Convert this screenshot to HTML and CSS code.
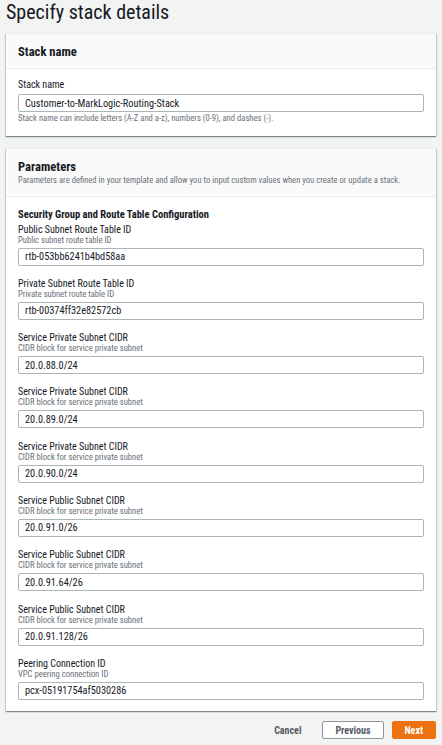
FILE: index.html
```html
<!DOCTYPE html>
<html lang="en">
<head>
<meta charset="utf-8">
<title>Specify stack details</title>
<link rel="stylesheet" href="styles.css">
</head>
<body>
<main class="page">
  <h1 class="title">Specify stack details</h1>

  <section class="card">
    <header class="card-header">
      <h2 class="card-title">Stack name</h2>
    </header>
    <div class="card-body card-body-stack">
      <div class="field field-single">
        <label class="label" for="stackName">Stack name</label>
        <input class="input" id="stackName" type="text" value="Customer-to-MarkLogic-Routing-Stack">
        <p class="hint">Stack name can include letters (A-Z and a-z), numbers (0-9), and dashes (-).</p>
      </div>
    </div>
  </section>

  <section class="card card-params">
    <header class="card-header">
      <h2 class="card-title">Parameters</h2>
      <p class="card-desc">Parameters are defined in your template and allow you to input custom values when you create or update a stack.</p>
    </header>
    <div class="card-body card-body-params">
      <h3 class="group-title">Security Group and Route Table Configuration</h3>

      <div class="field">
        <label class="label" for="p1">Public Subnet Route Table ID</label>
        <span class="desc">Public subnet route table ID</span>
        <input class="input" id="p1" type="text" value="rtb-053bb6241b4bd58aa">
      </div>
      <div class="field">
        <label class="label" for="p2">Private Subnet Route Table ID</label>
        <span class="desc">Private subnet route table ID</span>
        <input class="input" id="p2" type="text" value="rtb-00374ff32e82572cb">
      </div>
      <div class="field">
        <label class="label" for="p3">Service Private Subnet CIDR</label>
        <span class="desc">CIDR block for service private subnet</span>
        <input class="input" id="p3" type="text" value="20.0.88.0/24">
      </div>
      <div class="field">
        <label class="label" for="p4">Service Private Subnet CIDR</label>
        <span class="desc">CIDR block for service private subnet</span>
        <input class="input" id="p4" type="text" value="20.0.89.0/24">
      </div>
      <div class="field">
        <label class="label" for="p5">Service Private Subnet CIDR</label>
        <span class="desc">CIDR block for service private subnet</span>
        <input class="input" id="p5" type="text" value="20.0.90.0/24">
      </div>
      <div class="field">
        <label class="label" for="p6">Service Public Subnet CIDR</label>
        <span class="desc">CIDR block for service private subnet</span>
        <input class="input" id="p6" type="text" value="20.0.91.0/26">
      </div>
      <div class="field">
        <label class="label" for="p7">Service Public Subnet CIDR</label>
        <span class="desc">CIDR block for service private subnet</span>
        <input class="input" id="p7" type="text" value="20.0.91.64/26">
      </div>
      <div class="field">
        <label class="label" for="p8">Service Public Subnet CIDR</label>
        <span class="desc">CIDR block for service private subnet</span>
        <input class="input" id="p8" type="text" value="20.0.91.128/26">
      </div>
      <div class="field">
        <label class="label" for="p9">Peering Connection ID</label>
        <span class="desc">VPC peering connection ID</span>
        <input class="input" id="p9" type="text" value="pcx-05191754af5030286">
      </div>
    </div>
  </section>

  <footer class="actions">
    <button class="btn btn-link" type="button">Cancel</button>
    <button class="btn btn-normal" type="button">Previous</button>
    <button class="btn btn-primary" type="button">Next</button>
  </footer>
</main>
</body>
</html>
```
FILE: styles.css
```css
* { box-sizing: border-box; }

html, body {
  margin: 0;
  padding: 0;
  background: #f2f3f3;
}

body {
  font-family: "Roboto Condensed", "Liberation Sans", sans-serif;
  color: #16191f;
}

.page {
  padding: 0 6px;
  display: flex;
  flex-direction: column;
}

.title {
  margin: 0 0 9px;
  font-size: 20px;
  line-height: 24px;
  font-weight: 400;
  color: #16191f;
}

.card {
  background: #ffffff;
  box-shadow: 0 1px 1px 0 rgba(0, 28, 36, 0.3),
              1px 1px 1px 0 rgba(0, 28, 36, 0.15),
              -1px 1px 1px 0 rgba(0, 28, 36, 0.15);
  border-top: 1px solid #eaeded;
}

.card-params {
  margin-top: 12px;
}

.card-header {
  background: #fafafa;
  border-bottom: 1px solid #eaeded;
  padding: 10px 12px 8px;
}

.card-params .card-header {
  padding: 9.5px 12px 11px;
}

.card-title {
  margin: 0;
  font-size: 12.6px;
  line-height: 16px;
  font-weight: 700;
  color: #16191f;
}

.card-desc {
  margin: 0;
  font-size: 8.6px;
  line-height: 10px;
  color: #687078;
}

.card-body {
  padding: 0 12px;
}

.card-body-stack {
  padding-top: 10px;
  padding-bottom: 13px;
}

.card-body-params {
  padding-top: 11px;
  padding-bottom: 11.3px;
}

.group-title {
  margin: 0 0 3px;
  font-size: 10.5px;
  line-height: 13px;
  font-weight: 700;
  color: #16191f;
}

.field {
  display: flex;
  flex-direction: column;
  margin-bottom: 12.3px;
}

.field:last-child {
  margin-bottom: 0;
}

.label {
  font-size: 10px;
  line-height: 11px;
  color: #16191f;
}

.desc {
  font-size: 8.6px;
  line-height: 10px;
  color: #687078;
  margin-bottom: 3px;
}

.field-single .label {
  margin-bottom: 4px;
}

.input {
  display: block;
  width: 100%;
  height: 18px;
  margin: 0;
  padding: 0 6px;
  border: 1px solid #aab7b8;
  border-radius: 2px;
  background: #ffffff;
  font-family: inherit;
  font-size: 10.3px;
  color: #16191f;
  outline: none;
}

.hint {
  margin: 1px 0 0;
  font-size: 8.6px;
  line-height: 10px;
  color: #687078;
}

.actions {
  display: flex;
  justify-content: flex-end;
  align-items: center;
  gap: 8px;
  margin-top: 10.3px;
}

.btn {
  height: 17.5px;
  padding: 0 12px;
  margin: 0;
  font-family: inherit;
  font-size: 10px;
  font-weight: 700;
  line-height: 15px;
  border-radius: 2px;
  cursor: pointer;
}

.btn-link {
  background: transparent;
  border: 1px solid transparent;
  color: #545b64;
}

.btn-normal {
  background: #ffffff;
  border: 1px solid #8d9699;
  color: #545b64;
}

.btn-primary {
  background: #ec7211;
  border: 1px solid #ec7211;
  color: #ffffff;
}
```
